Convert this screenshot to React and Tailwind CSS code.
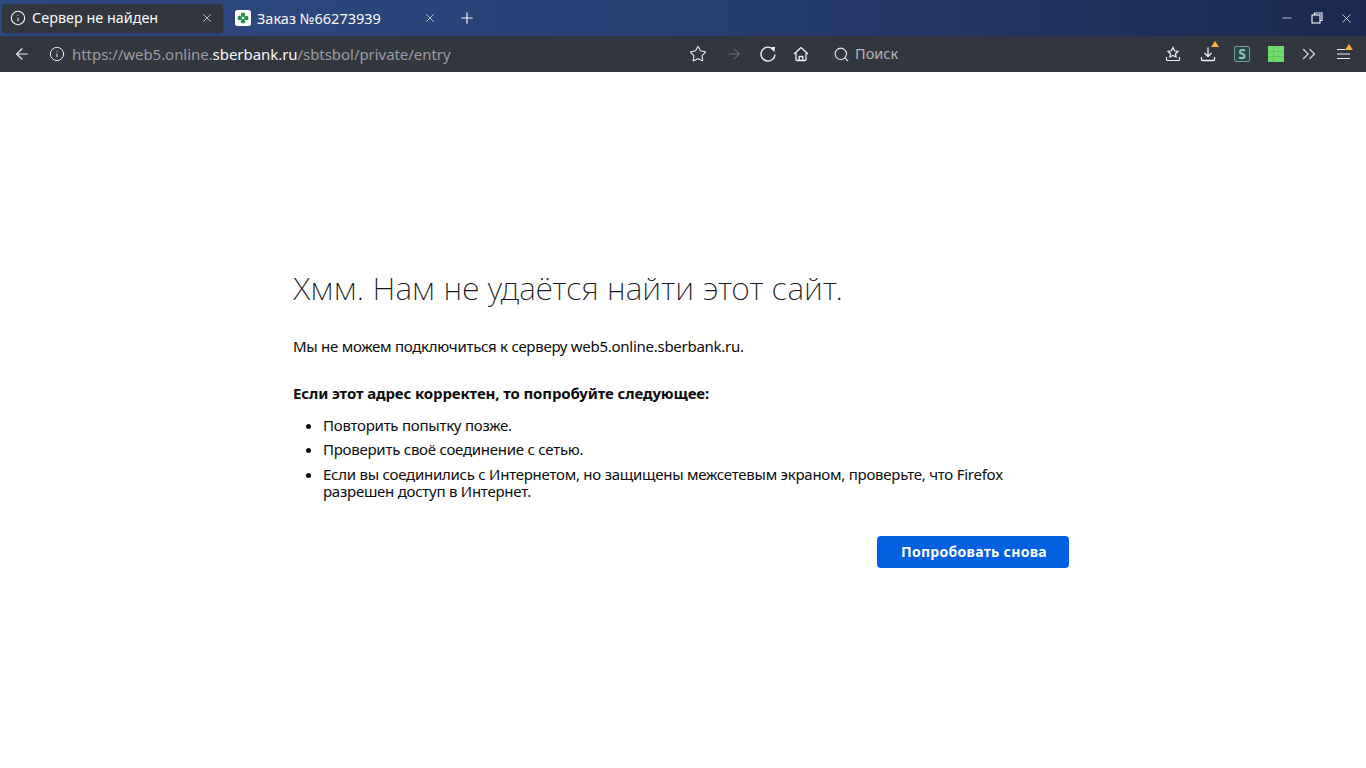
import { X, Plus, Info, ArrowLeft, ArrowRight, Star, Search, ChevronsRight, Minus } from "lucide-react";

const font = { fontFamily: '"Noto Sans", sans-serif' };

const Clover = () => (
    <svg width="16" height="16" viewBox="0 0 16 16">
        <rect width="16" height="16" rx="2.5" fill="#fff" />
        <circle cx="8" cy="4.7" r="2.2" fill="#1f8f45" />
        <circle cx="8" cy="11.3" r="2.2" fill="#1f8f45" />
        <circle cx="4.7" cy="8" r="2.2" fill="#1f8f45" />
        <circle cx="11.3" cy="8" r="2.2" fill="#1f8f45" />
    </svg>
);

const Dot = ({ className }) => (
    <svg width="8" height="6" viewBox="0 0 8 6" className={className}>
        <path d="M4 0 L8 6 L0 6 Z" fill="#ffb03b" />
    </svg>
);

const App = () => {
    return (
        <div className="flex h-[768px] flex-col overflow-hidden bg-white" style={font}>
            {/* tabs */}
            <div className="flex h-9 shrink-0 items-center bg-gradient-to-r from-[#2f4b84] via-[#283f73] to-[#1a2a4f] pl-0.5 text-[#f9f9fa]">
                <div className="flex h-[29px] w-[221px] items-center rounded bg-[#32363f] pl-2 pr-[9px] shadow-sm">
                    <Info size={16} strokeWidth={1.6} />
                    <span className="ml-[6px] flex-1 text-[14.4px] leading-none">Сервер не найден</span>
                    <X size={14} strokeWidth={1.4} className="text-[#d8d9dc]" />
                </div>
                <div className="flex h-[29px] w-[225px] items-center pl-[12px] pr-[11px]">
                    <Clover />
                    <span className="ml-[6px] flex-1 text-[14.5px] leading-none">Заказ №66273939</span>
                    <X size={14} strokeWidth={1.4} className="text-[#d8d9dc]" />
                </div>
                <Plus size={18} strokeWidth={1.5} className="ml-[10px]" />
                <div className="ml-auto flex items-center gap-[17px] pr-[12px]">
                    <Minus size={14} strokeWidth={1.3} className="translate-x-px" />
                    <svg width="12" height="12" viewBox="0 0 12 12" fill="none" stroke="#f9f9fa" strokeWidth="1.1" className="translate-x-px">
                        <rect x="1" y="3" width="8" height="8" />
                        <path d="M3.5 3 V1 H11 V8.5 H9" />
                    </svg>
                    <X size={15} strokeWidth={1.2} />
                </div>
            </div>

            {/* toolbar */}
            <div className="flex h-9 shrink-0 items-center bg-[#32363f] text-[#f0f0f2]">
                <ArrowLeft size={18} strokeWidth={1.5} className="ml-[13px]" />
                <Info size={16} strokeWidth={1.5} className="ml-[18px]" />
                <div className="ml-[7px] w-[617px] text-[15px] tracking-[-0.05px] text-[#9a9ca2]">
                    https://web5.online.<span className="text-[#f9f9fa]">sberbank.ru</span>/sbtsbol/private/entry
                </div>
                <Star size={18} strokeWidth={1.4} />
                <ArrowRight size={18} strokeWidth={1.4} className="ml-[18px] text-[#6d7078]" />
                <svg width="16" height="16" viewBox="0 0 16 16" fill="none" stroke="#f0f0f2" strokeWidth="1.4" className="ml-[17px]">
                    <path d="M15 8.5 A7 7 0 1 1 10.5 1.6" />
                    <path d="M9.5 1.5 L15 0.8 L14.5 6 Z" fill="#f0f0f2" stroke="none" />
                </svg>
                <svg width="16" height="16" viewBox="0 0 16 16" fill="none" stroke="#f0f0f2" strokeWidth="1.3" strokeLinejoin="round" className="ml-[17px]">
                    <path d="M1 8 L8 1.5 L15 8" />
                    <path d="M3 6.5 V13.5 Q3 14.5 4 14.5 H12 Q13 14.5 13 13.5 V6.5" />
                    <path d="M6.2 14.5 V10.5 H9.8 V14.5" />
                </svg>
                <Search size={17} strokeWidth={1.5} className="ml-[24px]" />
                <span className="ml-[5px] text-[14.5px] text-[#b4b6ba]">Поиск</span>
                <div className="ml-auto flex items-center pr-[15px]">
                    <div className="relative mr-[19px]">
                        <svg width="16" height="16" viewBox="0 0 16 16" fill="none" stroke="#f0f0f2" strokeWidth="1.2">
                            <path d="M8 1.5 L9.6 4.8 L13 5.3 L10.5 7.7 L11.1 11 L8 9.4 L4.9 11 L5.5 7.7 L3 5.3 L6.4 4.8 Z" />
                            <path d="M1.5 11 V13.5 Q1.5 14.5 2.5 14.5 H13.5 Q14.5 14.5 14.5 13.5 V11" />
                        </svg>
                    </div>
                    <div className="relative mr-[18px]">
                        <svg width="16" height="16" viewBox="0 0 16 16" fill="none" stroke="#f0f0f2" strokeWidth="1.3">
                            <path d="M8 1.5 V10.5 M4.5 7 L8 10.5 L11.5 7" />
                            <path d="M1.5 11 V13.5 Q1.5 14.5 2.5 14.5 H13.5 Q14.5 14.5 14.5 13.5 V11" />
                        </svg>
                        <Dot className="absolute -right-[3px] -top-[5px]" />
                    </div>
                    <div className="mr-[18px] flex h-4 w-4 items-center justify-center rounded-[2px] border border-[#6f9a96] bg-[#2a4a4a] text-[14px] font-bold leading-none text-[#8fc7bd]">
                        S
                    </div>
                    <div className="mr-[14px] grid h-4 w-4 grid-cols-[5px_1fr] grid-rows-3 gap-px bg-[#5cc95c]">
                        <div className="bg-[#6ddc6d]" />
                        <div className="bg-[#6ddc6d]" />
                        <div className="bg-[#6ddc6d]" />
                        <div className="bg-[#6ddc6d]" />
                        <div className="bg-[#6ddc6d]" />
                        <div className="bg-[#6ddc6d]" />
                    </div>
                    <ChevronsRight size={22} strokeWidth={1.6} className="mr-[17px] text-[#c8c9cc]" />
                    <div className="relative">
                        <svg width="14" height="12" viewBox="0 0 14 12" stroke="#f0f0f2" strokeWidth="1.2">
                            <path d="M0 1.5 H8 M0 6 H13 M0 10.5 H13" />
                        </svg>
                        <Dot className="absolute -right-[2px] -top-[4px]" />
                    </div>
                </div>
            </div>

            {/* error page */}
            <div className="flex flex-1 justify-center pr-[4px]">
                <div className="w-[776px] pt-[193px] text-[#0c0c0d]">
                    <h1 className="text-[32px] font-extralight leading-[46px] tracking-[0.05px] text-[#1a1a1e]">
                        Хмм. Нам не удаётся найти этот сайт.
                    </h1>
                    <p className="mt-[23px] text-[15px] leading-[24px] tracking-[-0.27px]">
                        Мы не можем подключиться к серверу web5.online.sberbank.ru.
                    </p>
                    <p className="mt-[23px] text-[15px] font-bold leading-[24px] tracking-[-0.12px]">
                        Если этот адрес корректен, то попробуйте следующее:
                    </p>
                    <ul className="mt-[11px] list-disc pl-[30px] text-[15px] leading-[18px] tracking-[-0.25px]">
                        <li className="mt-[6px]">Повторить попытку позже.</li>
                        <li className="mt-[6px]">Проверить своё соединение с сетью.</li>
                        <li className="mt-[8px] w-[700px] leading-[17px]">
                            Если вы соединились с Интернетом, но защищены межсетевым экраном, проверьте, что Firefox разрешен доступ в Интернет.
                        </li>
                    </ul>
                    <div className="mt-[36px] flex justify-end">
                        <button className="h-8 w-[192px] rounded bg-[#0060df] pb-0.5 pl-0.5 text-[14px] font-bold tracking-[0.3px] text-white">
                            Попробовать снова
                        </button>
                    </div>
                </div>
            </div>
        </div>
    );
};

export default App;
